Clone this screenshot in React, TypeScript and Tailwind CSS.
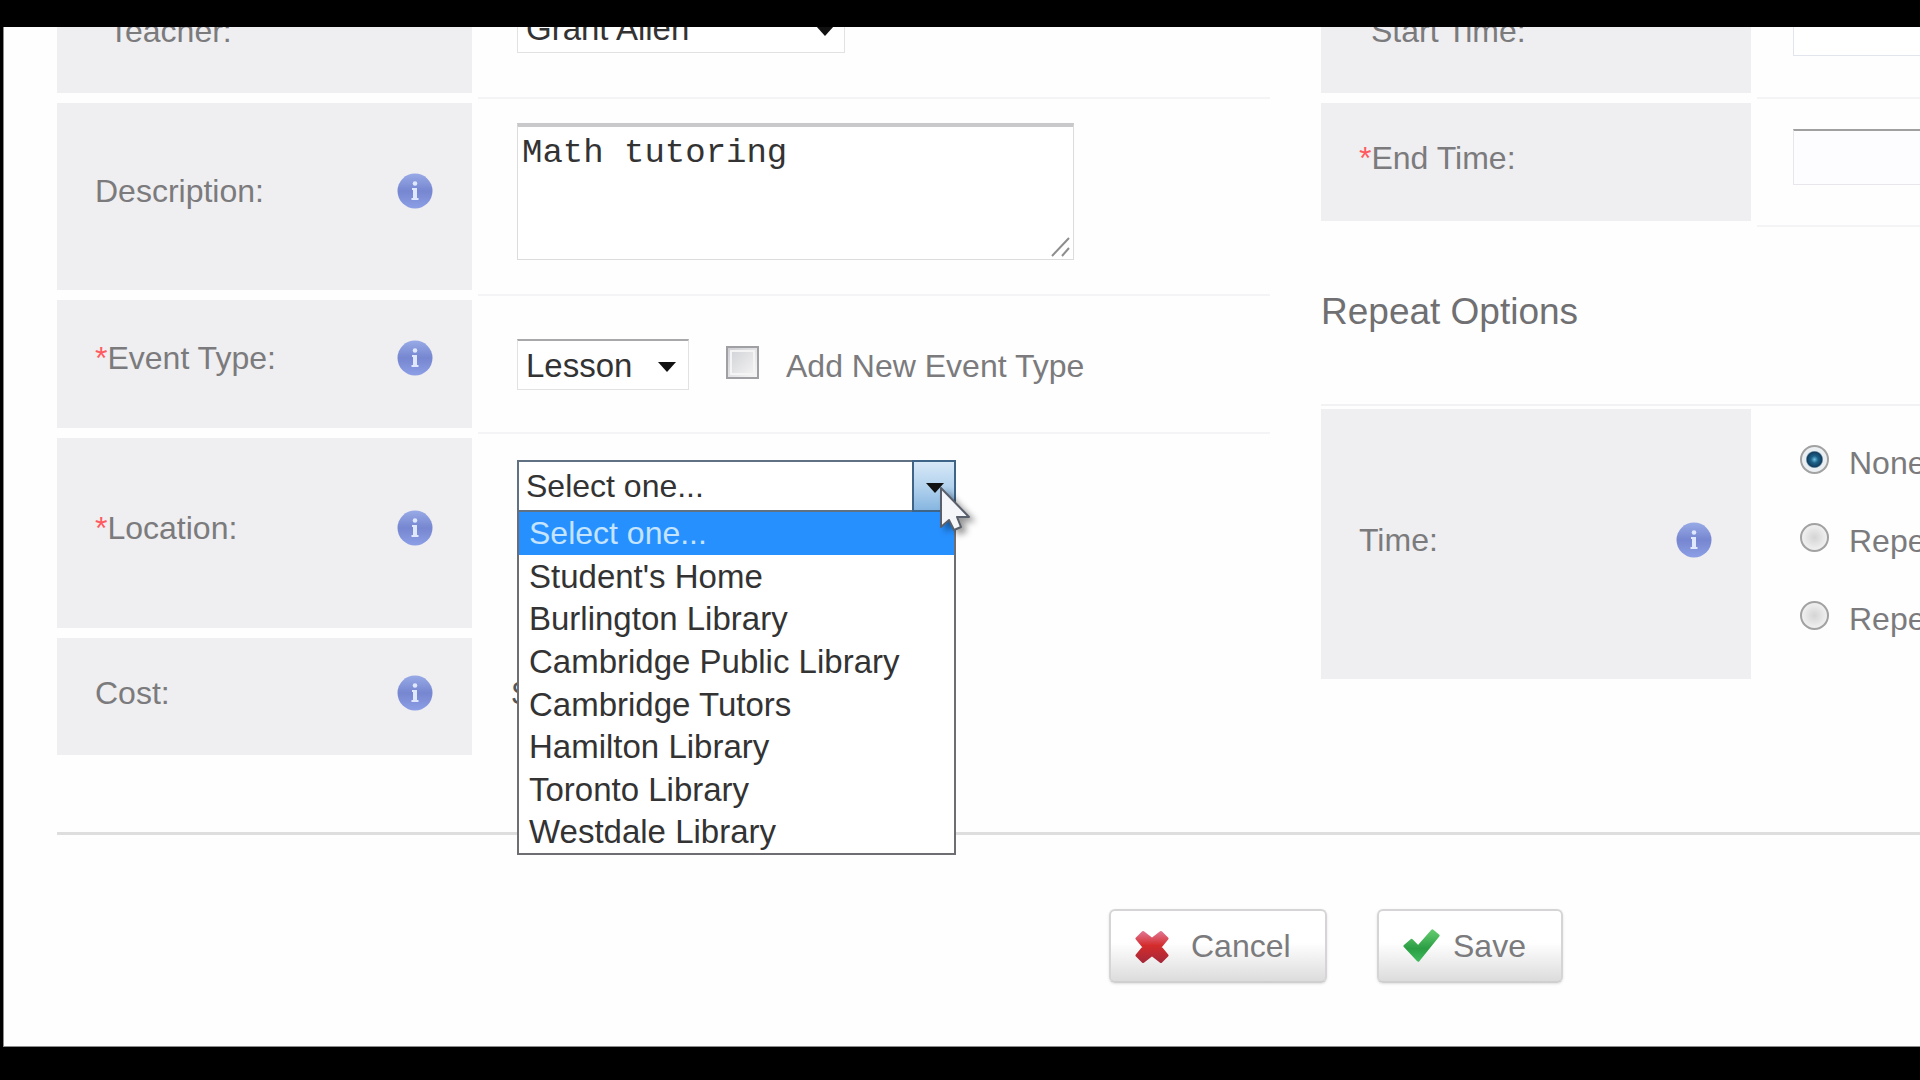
import React from 'react';
import clsx from 'clsx';

const locations = [
  'Select one...',
  "Student's Home",
  'Burlington Library',
  'Cambridge Public Library',
  'Cambridge Tutors',
  'Hamilton Library',
  'Toronto Library',
  'Westdale Library',
];

function InfoIcon() {
  return (
    <svg className="w-9 h-9 shrink-0" viewBox="0 0 36 36" aria-hidden="true">
      <defs>
        <linearGradient id="info" x1="0" y1="0" x2="0" y2="1">
          <stop offset="0" stopColor="#98aae6" />
          <stop offset="0.5" stopColor="#7686d0" />
          <stop offset="1" stopColor="#8c9fe6" />
        </linearGradient>
      </defs>
      <circle cx="18" cy="18" r="17.5" fill="url(#info)" />
      <circle cx="18" cy="10.500" r="2.300" fill="#dfe8ff" />
      <path d="M15 15h5v10h1.500v2h-7V25H16v-8h-1z" fill="#dfe8ff" />
    </svg>
  );
}

function Arrow({ className }: { className: string }) {
  return (
    <svg className={clsx('absolute w-[18px] h-[10px] pointer-events-none', className)} viewBox="0 0 18 10" aria-hidden="true">
      <path d="M0 0h18L9 10z" fill="#111" />
    </svg>
  );
}

type RowProps = {
  id: string;
  label: string;
  required?: boolean;
  info?: boolean;
  height: string;
  labelWidth?: string;
  labelPad?: string;
  line?: boolean;
  cell: string;
  children?: React.ReactNode;
};

function Row({
  id,
  label,
  required,
  info,
  height,
  labelWidth = 'w-[415px]',
  labelPad = 'pl-[38px] pb-2',
  line = true,
  cell,
  children,
}: RowProps) {
  return (
    <div className="flex">
      <div className={clsx('shrink-0 flex items-center justify-between mb-[10px] pr-[39px] bg-[#efeef0]', height, labelWidth, labelPad)}>
        <label htmlFor={id}>
          {required && <span className="text-[#ff5a5f]">*</span>}
          {label}
        </label>
        {info && <InfoIcon />}
      </div>
      <div className={clsx('flex-1 min-w-0 flex ml-[6px] mb-1 border-b-2', line ? 'border-[#f4f4f6]' : 'border-transparent', cell)}>
        {children}
      </div>
    </div>
  );
}

const selectBox =
  'appearance-none bg-white border border-t-2 border-[#e2e2e4] border-t-[#a8a8aa] pl-2 pt-[3px] text-[33px] text-[#333]';

function Radio({ id, label, checked }: { id: string; label: string; checked?: boolean }) {
  return (
    <div className="flex items-center h-[78px] gap-5">
      <input
        id={id}
        type="radio"
        name="repeat"
        defaultChecked={checked}
        className="appearance-none shrink-0 w-[29px] h-[29px] mb-2 rounded-full border-2 border-[#a2a2a2] bg-[radial-gradient(circle,#d4d4d4_0%,#ececec_60%,#f8f8f8_100%)] checked:bg-[radial-gradient(circle,#6fc0e0_0%,#1d6189_20%,#123f61_42%,#e8eef2_50%,#f4f4f4_100%)]"
      />
      <label htmlFor={id} className="whitespace-nowrap">{label}</label>
    </div>
  );
}

function LocationSelect() {
  return (
    <div className="relative w-[439px] h-[52px]">
      <select
        id="location"
        className="appearance-none w-full h-full bg-white border-2 border-[#5f7183] pl-[7px] pr-12 text-[#333]"
      >
        {locations.map((name) => <option key={name}>{name}</option>)}
      </select>
      <span className="absolute right-0 top-0 w-11 h-[52px] border-2 border-[#3e6588] bg-linear-to-b from-[#d7e8f7] via-[#b4d3ee] to-[#86b6e0] pointer-events-none" />
      <Arrow className="right-[12px] top-[23px]" />
      <ul
        role="listbox"
        aria-label="Location"
        className="absolute z-10 left-0 top-[52px] flex flex-col w-full h-[343px] bg-white border-2 border-t-0 border-[#6d6d72] text-[33px] leading-[43px] text-[#333]"
      >
        {locations.map((name, i) => (
          <li
            key={name}
            role="option"
            aria-selected={i === 0}
            className={clsx('flex-1 min-h-0 pl-[10px]', i === 0 && 'bg-[#2790ff] text-[#c4e4ff] text-[32px]')}
          >
            {name}
          </li>
        ))}
      </ul>
      <svg className="absolute z-20 left-[422px] top-[26px] w-9 h-12 drop-shadow-[5px_4px_3px_rgba(0,0,0,0.4)]" viewBox="0 0 36 48" aria-hidden="true">
        <path d="M2 2v39l8-7 5 10 7-3-4-10h12z" fill="#f4f6fa" stroke="#5a5f6c" strokeWidth="2" strokeLinejoin="round" />
      </svg>
    </div>
  );
}

const buttonStyle =
  'flex items-center h-[74px] pl-6 rounded-md border-2 border-[#d6d4d6] border-b-[#cfcfcf] bg-linear-to-b from-white from-45% to-[#dcdcdd] shadow-sm';

export default function App() {
  return (
    <div className="h-screen bg-black pt-[27px] pb-[33px] pl-[3px] font-['Liberation_Sans',Arial,sans-serif] text-[32px] leading-10 text-[#7b7b7d]">
      <form className="h-full overflow-hidden bg-[#fefefe] border-l border-b border-[#8c8c8c] pl-[53px]" onSubmit={(e) => e.preventDefault()}>
        <div className="flex gap-[51px] -mt-[50px]">
          <div className="flex-1 min-w-0">
            <Row id="teacher" label="Teacher:" height="h-[116px]" labelPad="pl-[52px] pb-2" cell="items-center pl-[39px] pb-5">
              <div className="relative">
                <select id="teacher" className={clsx(selectBox, 'w-[328px] h-[51px]')}>
                  <option>Grant Allen</option>
                </select>
                <Arrow className="right-[11px] top-[24px]" />
              </div>
            </Row>
            <Row id="description" label="Description:" info height="h-[187px]" labelPad="pl-[38px] pb-3" cell="items-center pl-[39px] pb-[14px]">
              <div className="relative flex">
                <textarea
                  id="description"
                  defaultValue="Math tutoring"
                  className="resize-none w-[557px] h-[137px] bg-white border border-t-4 border-[#dcdcde] border-t-[#c9c9cb] pl-1 pt-[6px] font-['Liberation_Mono',monospace] text-[34px] leading-10 text-[#333]"
                />
                <svg className="absolute right-[3px] bottom-[3px] w-5 h-5" viewBox="0 0 20 20" fill="none" stroke="#8e8e8e" strokeWidth="2" aria-hidden="true">
                  <path d="M1 19L18 1M11 19l7-8" />
                </svg>
              </div>
            </Row>
            <Row id="eventType" label="Event Type:" required info height="h-[128px]" labelPad="pl-[38px] pb-3" cell="items-center pl-[39px] pb-1">
              <div className="relative">
                <select id="eventType" className={clsx(selectBox, 'w-[172px] h-[51px]')}>
                  <option>Lesson</option>
                </select>
                <Arrow className="right-[13px] top-[23px]" />
              </div>
              <input
                id="newType"
                type="checkbox"
                className="appearance-none w-[33px] h-[33px] ml-[37px] mb-1 border-2 border-[#a0a0a4] bg-linear-to-br from-[#cfd0d4] to-[#f6f6f6] outline-2 -outline-offset-6 outline-[#f4f4f4]"
              />
              <label htmlFor="newType" className="ml-[27px] pt-1">Add New Event Type</label>
            </Row>
            <Row id="location" label="Location:" required info height="h-[190px]" labelPad="pl-[38px] pb-[10px]" line={false} cell="items-start pl-[39px] pt-[22px]">
              <LocationSelect />
            </Row>
            <Row id="cost" label="Cost:" info height="h-[117px]" line={false} cell="items-center pl-[34px] pb-3">
              <span className="text-[#555]">$</span>
              <input id="cost" type="text" className="w-40 h-[51px] ml-3 border border-[#e2e2e4]" />
            </Row>
          </div>

          <div className="w-[599px] shrink-0">
            <Row id="start" label="Start Time:" height="h-[116px]" labelWidth="w-[430px]" labelPad="pl-[50px] pb-2" cell="items-center pl-9 pb-[18px]">
              <input id="start" type="text" className="w-full h-[56px] bg-white border border-r-0 border-t-2 border-[#e2e4ee] border-t-[#a0a0a0]" />
            </Row>
            <Row id="end" label="End Time:" required height="h-[118px]" labelWidth="w-[430px]" cell="items-center pl-9 pb-[14px]">
              <input id="end" type="text" className="w-full h-[56px] bg-[#fdfcff] border border-r-0 border-t-2 border-[#e8e6ec] border-t-[#a0a0a0]" />
            </Row>
            <h2 className="mt-[61px] mb-[72px] text-[37px] leading-10 text-[#707072]">Repeat Options</h2>
            <div className="border-t-2 border-[#f2f2f4] pt-[3px]">
              <Row id="none" label="Time:" info height="h-[270px]" labelWidth="w-[430px]" line={false} cell="flex-col justify-center pl-[43px] pb-[10px] overflow-hidden">
                <Radio id="none" label="None" checked />
                <Radio id="daily" label="Repeat Daily" />
                <Radio id="weekly" label="Repeat Weekly" />
              </Row>
            </div>
          </div>
        </div>

        <div className="mt-[67px] border-t-3 border-[#dededf] pt-[74px] pl-[1052px] flex gap-[50px]">
          <button type="button" className={clsx(buttonStyle, 'w-[218px] gap-5')}>
            <svg className="w-9 h-9" viewBox="0 0 36 36" aria-hidden="true">
              <defs>
                <linearGradient id="cross" x1="0" y1="0" x2="0" y2="1">
                  <stop offset="0" stopColor="#e0708a" />
                  <stop offset="0.45" stopColor="#d42c2c" />
                  <stop offset="1" stopColor="#a82838" />
                </linearGradient>
              </defs>
              <path
                d="M8 4.500l9 7 9-7 6 6-7 8.500 7 8.500-6 6-9-7-9 7-6-6 7-8.500-7-8.500z"
                fill="url(#cross)"
                stroke="url(#cross)"
                strokeWidth="3"
                strokeLinejoin="round"
              />
            </svg>
            Cancel
          </button>
          <button type="submit" className={clsx(buttonStyle, 'w-[186px] gap-3')}>
            <svg className="w-[38px] h-9" viewBox="0 0 40 36" aria-hidden="true">
              <defs>
                <linearGradient id="check" x1="0" y1="0" x2="0" y2="1">
                  <stop offset="0" stopColor="#62c96d" />
                  <stop offset="0.6" stopColor="#2b9e44" />
                  <stop offset="1" stopColor="#3cb85a" />
                </linearGradient>
              </defs>
              <path d="M2 18l7-6 7 7L31 2l6 5-21 26z" fill="url(#check)" stroke="url(#check)" strokeWidth="3" strokeLinejoin="round" />
            </svg>
            Save
          </button>
        </div>
      </form>
    </div>
  );
}
